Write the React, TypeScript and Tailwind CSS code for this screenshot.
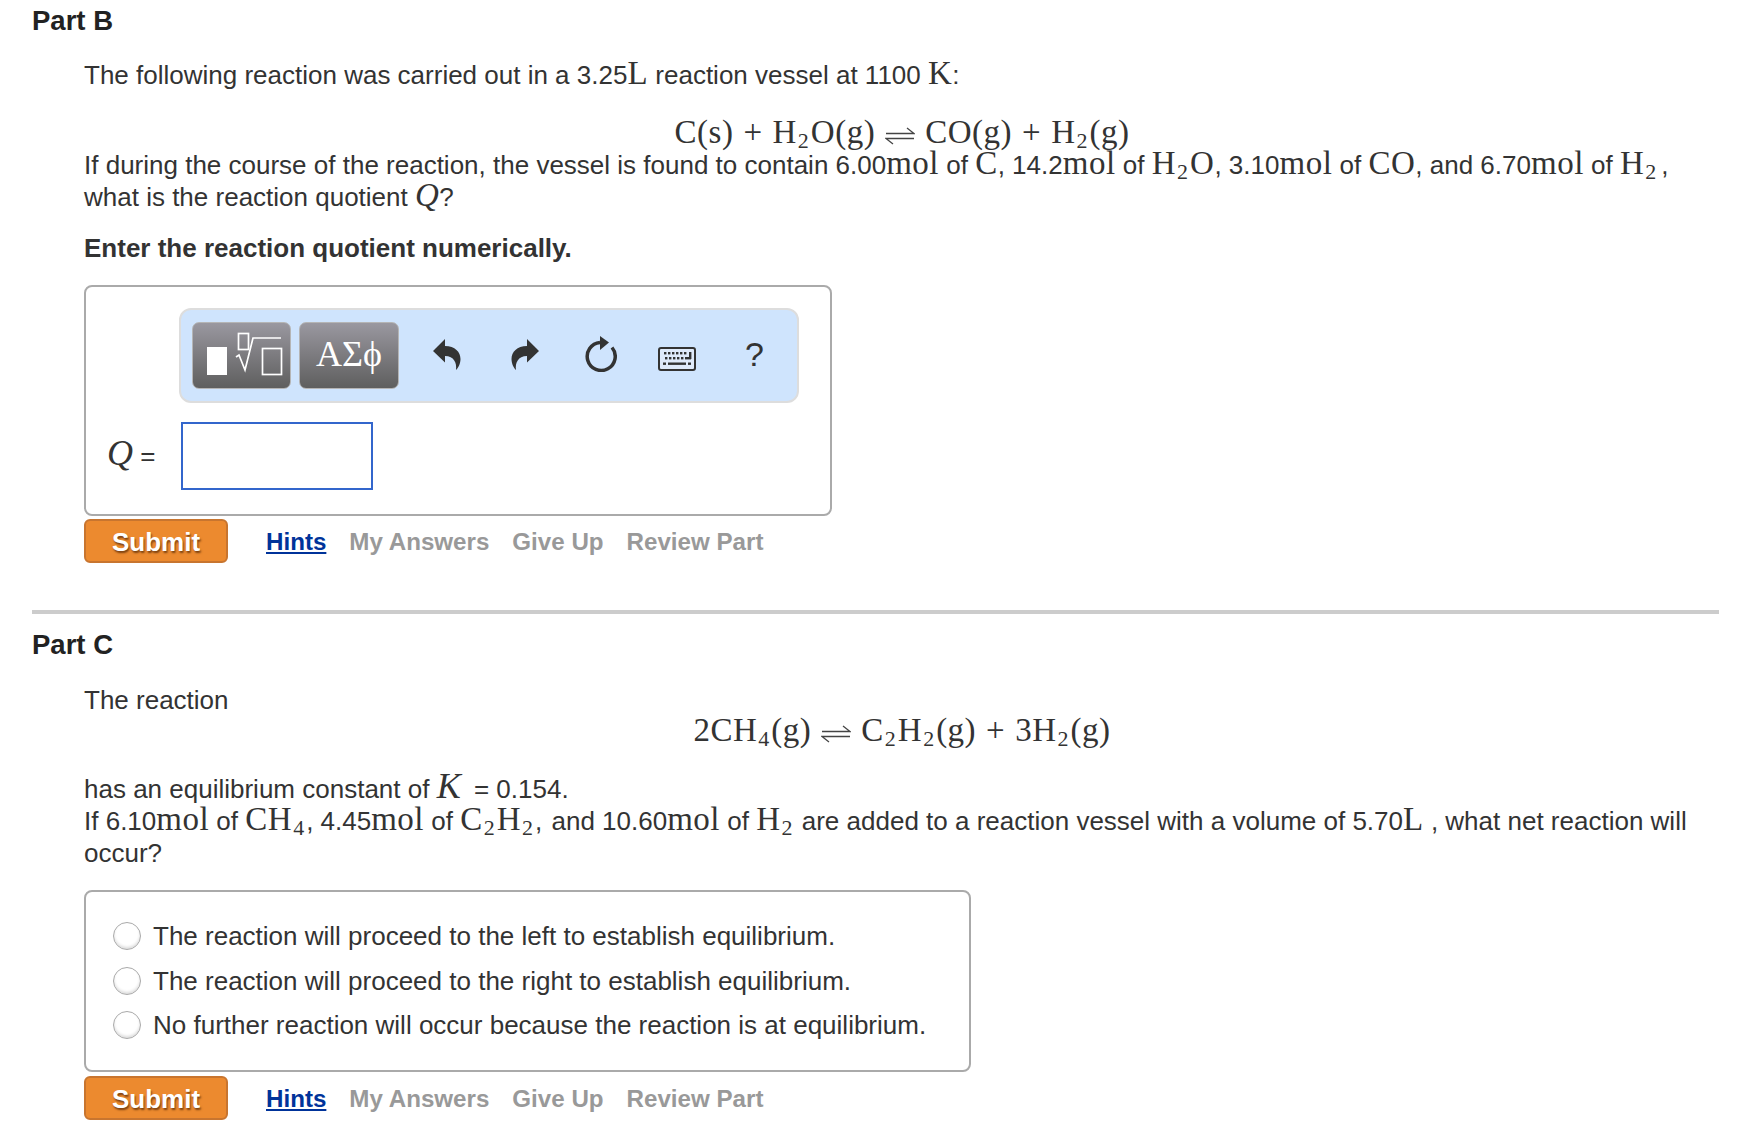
import type { ReactNode } from "react";

function M({ children, italic }: { children: ReactNode; italic?: boolean }) {
  return (
    <span className={`font-['Liberation_Serif',serif] text-[33px] leading-[0] tracking-[0.5px] ${italic ? "italic" : ""}`}>
      {children}
    </span>
  );
}

function Sub({ children }: { children: ReactNode }) {
  return <span className="font-['Liberation_Serif',serif] text-[22px] leading-[0] tracking-normal align-[-5px] ml-px mr-[2px]">{children}</span>;
}

function Plus() {
  return <span className="mx-[10px]">+</span>;
}

function Equil() {
  return (
    <svg viewBox="0 0 30 20" className="inline-block w-[30px] h-[20px] mx-[10px] align-[-3px]" fill="none" stroke="#444" strokeWidth="1.3">
      <path d="M1 7.5H29L22 2" />
      <path d="M29 12.5H1L8 18" />
    </svg>
  );
}

function Actions() {
  return (
    <div className="flex items-center mt-[3px]">
      <button className="w-[144px] h-[44px] pt-[2px] rounded-[6px] border-2 border-[#c8752f] bg-[#ec8a2f] text-white text-[26px] font-bold leading-none [text-shadow:1px_2px_2px_#7a4010]">
        Submit
      </button>
      <div className="flex items-center gap-[23px] ml-[38px] pt-[2px] text-[24.15px] font-bold leading-none text-[#999999]">
        <span className="text-[#00339a] underline">Hints</span>
        <span>My Answers</span>
        <span>Give Up</span>
        <span>Review Part</span>
      </div>
    </div>
  );
}

function Radio({ children }: { children: ReactNode }) {
  return (
    <div className="flex items-center h-[44.5px]">
      <span className="w-[28px] h-[28px] rounded-full border border-[#aaaaaa] bg-white shadow-[inset_0_-2px_3px_#dddddd] shrink-0" />
      <span className="ml-[12px]">{children}</span>
    </div>
  );
}

function UndoIcon({ flip }: { flip?: boolean }) {
  return (
    <svg viewBox="0 0 28 31" className={`w-[28px] h-[31px] shrink-0 ${flip ? "-scale-x-100" : ""}`} fill="#333333">
      <path d="M0 12L12 0V7C22 7 27.5 13 27.5 20C27.5 25 25 29 23 31C24 24 21 17 12 17V23.5Z" />
    </svg>
  );
}

function ReloadIcon() {
  return (
    <svg viewBox="0 0 32 36" className="w-[32px] h-[36px] shrink-0" fill="none">
      <path d="M15 6.5A14 14 0 1 0 27 11.5" stroke="#333333" strokeWidth="3.5" />
      <path d="M15 0L24 6.5L15 14Z" fill="#333333" />
    </svg>
  );
}

function KeyboardIcon() {
  const top = [6, 10, 14, 18, 22, 26];
  const mid = [7, 11, 15, 19, 23];
  return (
    <svg viewBox="0 0 38 24" className="w-[38px] h-[24px] shrink-0 mt-[10px]" fill="#333333">
      <rect x="1" y="1" width="36" height="22" rx="2" fill="#dfeafa" stroke="#333333" strokeWidth="2" />
      {top.map((x) => (
        <rect key={x} x={x} y="5" width="2.4" height="2.4" />
      ))}
      <rect x="31" y="5" width="2.4" height="7" />
      {mid.map((x) => (
        <rect key={x} x={x} y="10" width="2.4" height="2.4" />
      ))}
      <rect x="27" y="10" width="6" height="2.4" />
      <rect x="5" y="15.5" width="3" height="2.4" />
      <rect x="10" y="15.5" width="18" height="2.4" />
      <rect x="30" y="15.5" width="3" height="2.4" />
    </svg>
  );
}

function RootIcon() {
  return (
    <svg viewBox="0 0 99 67" className="w-[99px] h-[67px] shrink-0" fill="none" stroke="#ffffff" strokeWidth="1.7">
      <rect x="15" y="25" width="20" height="28" fill="#ffffff" stroke="none" />
      <rect x="46.5" y="11.5" width="10" height="16" />
      <path d="M44 35L47 33L53 48L61 16H89" />
      <rect x="70.5" y="26.5" width="19" height="26" />
    </svg>
  );
}

export default function App() {
  return (
    <div className="min-h-screen bg-white font-['Liberation_Sans',Arial,sans-serif] text-[26px] leading-[32px] text-[#333333] pl-[32px] pr-[27px] pt-[5px]">
      <h2 className="text-[27.5px] font-bold leading-[32px] text-[#222222]">Part B</h2>
      <div className="pl-[52px]">
        <p className="mt-[22px]">
          The following reaction was carried out in a 3.25<M>L</M> reaction vessel at 1100 <M>K</M>:
        </p>
        <div className="mt-[27px] h-[31px] pl-px text-center whitespace-nowrap tracking-[1px]">
          <M>
            C(s)
            <Plus />H<Sub>2</Sub>O(g)
            <Equil />
            CO(g)
            <Plus />H<Sub>2</Sub>(g)
          </M>
        </div>
        <p className="whitespace-nowrap">
          If during the course of the reaction, the vessel is found to contain 6.00<M>mol</M> of <M>C</M>, 14.2<M>mol</M> of{" "}
          <M>
            H<Sub>2</Sub>O
          </M>
          , 3.10<M>mol</M> of <M>CO</M>, and 6.70<M>mol</M> of{" "}
          <M>
            H<Sub>2</Sub>
          </M>
          <span className="ml-[3px]">,</span>
          <br />
          what is the reaction quotient <M italic>Q</M>?
        </p>
        <p className="mt-[19px] font-bold">Enter the reaction quotient numerically.</p>

        <div className="mt-[21px] w-[748px] h-[231px] rounded-[8px] border-2 border-[#aaaaaa]">
          <div className="ml-[93px] mt-[21px] w-[620px] h-[95px] rounded-[12px] border-2 border-[#dddddd] bg-[#cfe4fd] flex items-center pl-[11px]">
            <div className="w-[99px] h-[67px] rounded-[7px] border border-[#b5b5b5] bg-gradient-to-b from-[#9a98a0] to-[#5f5f5f] shrink-0 box-border overflow-hidden flex items-center justify-center">
              <RootIcon />
            </div>
            <div className="w-[100px] h-[67px] pb-[4px] ml-[8px] rounded-[7px] border border-[#b5b5b5] bg-gradient-to-b from-[#9a98a0] to-[#5f5f5f] shrink-0 flex items-center justify-center font-['Liberation_Serif',serif] text-[36px] leading-none text-white">
              ΑΣϕ
            </div>
            <div className="ml-[34px] -mt-[3px] flex">
              <UndoIcon />
            </div>
            <div className="ml-[50px] -mt-[3px] flex">
              <UndoIcon flip />
            </div>
            <div className="ml-[46px] -mt-[3px] flex">
              <ReloadIcon />
            </div>
            <div className="ml-[41px] -mt-[3px] flex">
              <KeyboardIcon />
            </div>
            <span className="ml-[49px] -mt-[4px] text-[34px] leading-none text-[#333333]">?</span>
          </div>
          <div className="mt-[19px] pl-[21px] flex items-center">
            <span className="w-[74px] shrink-0">
              <span className="font-['Liberation_Serif',serif] italic text-[36px] leading-[0]">Q</span> =
            </span>
            <div className="w-[192px] h-[68px] border-2 border-[#3366cc] bg-white" />
          </div>
        </div>
        <Actions />
      </div>

      <div className="mt-[47px] h-[4px] bg-[#cccccc]" />

      <h2 className="mt-[15px] text-[27.5px] font-bold leading-[32px] text-[#222222]">Part C</h2>
      <div className="pl-[52px]">
        <p className="mt-[23px]">The reaction</p>
        <div className="h-[33px] pl-px text-center whitespace-nowrap tracking-[1px]">
          <M>
            2CH<Sub>4</Sub>(g)
            <Equil />C<Sub>2</Sub>H<Sub>2</Sub>(g)
            <Plus />
            3H<Sub>2</Sub>(g)
          </M>
        </div>
        <p className="mt-[24px]">
          has an equilibrium constant of{" "}
          <span className="font-['Liberation_Serif',serif] italic text-[36px] leading-[0] mr-[6px]">K</span> = 0.154.
        </p>
        <p className="whitespace-nowrap">
          If 6.10<M>mol</M> of{" "}
          <M>
            CH<Sub>4</Sub>
          </M>
          , 4.45<M>mol</M> of{" "}
          <M>
            C<Sub>2</Sub>H<Sub>2</Sub>
          </M>
          ,<span className="ml-[2px]"> and 10.60</span>
          <M>mol</M> of{" "}
          <M>
            H<Sub>2</Sub>
          </M>{" "}
          are added to a reaction vessel with a volume of 5.70<M>L</M> , what net reaction will
          <br />
          occur?
        </p>

        <div className="mt-[21px] w-[887px] h-[182px] rounded-[8px] border-2 border-[#aaaaaa] pl-[27px] pt-[22px]">
          <Radio>The reaction will proceed to the left to establish equilibrium.</Radio>
          <Radio>The reaction will proceed to the right to establish equilibrium.</Radio>
          <Radio>No further reaction will occur because the reaction is at equilibrium.</Radio>
        </div>
        <div className="pt-px">
          <Actions />
        </div>
      </div>
    </div>
  );
}
